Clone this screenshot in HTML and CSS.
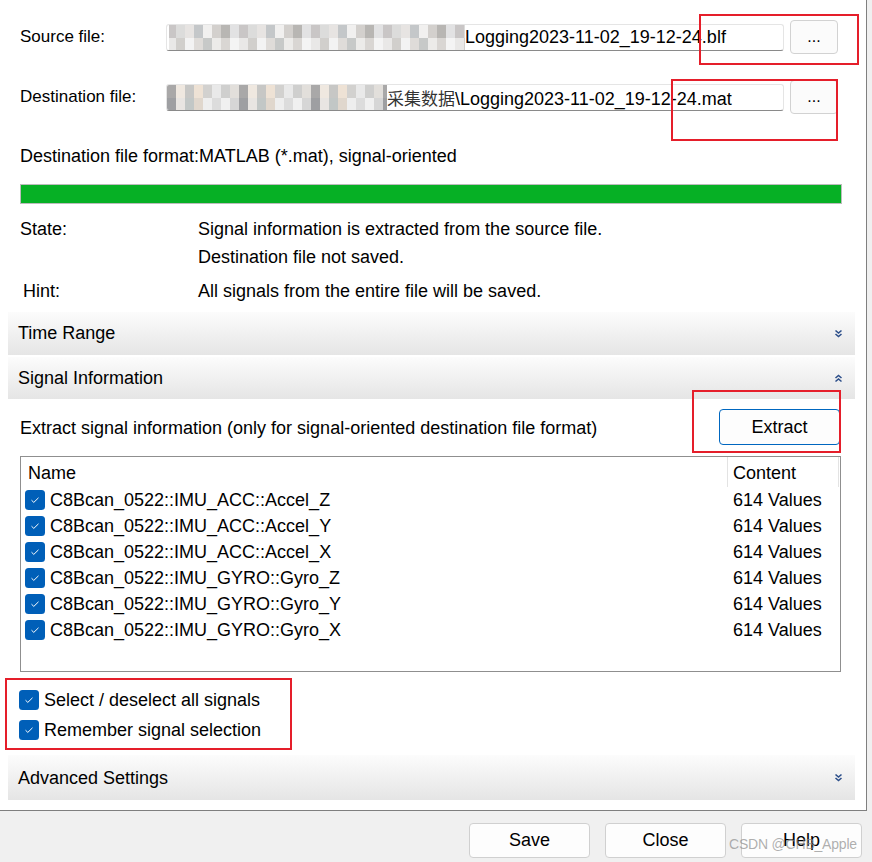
FILE: index.html
```html
<!DOCTYPE html>
<html>
<head>
<meta charset="utf-8">
<link rel="stylesheet" href="styles.css">
</head>
<body>
<div class="window">
  <div class="panel">
    <div class="file-row first">
      <div class="label">Source file:</div>
      <div class="input">
        <div class="mosaic m1"></div>
        <span class="path">Logging2023-11-02_19-12-24.blf</span>
      </div>
      <div class="browse">...</div>
    </div>
    <div class="file-row second">
      <div class="label">Destination file:</div>
      <div class="input">
        <div class="mosaic m2"></div>
        <span class="path"><span class="cjk">采集数据</span>\Logging2023-11-02_19-12-24.mat</span>
      </div>
      <div class="browse">...</div>
    </div>
    <div class="format">Destination file format:MATLAB (*.mat), signal-oriented</div>
    <div class="progress"><div class="progress-fill"></div></div>
    <div class="info">
      <div class="info-row"><span class="info-key">State:</span><span>Signal information is extracted from the source file.</span></div>
      <div class="info-row"><span class="info-key"></span><span>Destination file not saved.</span></div>
      <div class="info-row hint"><span class="info-key">Hint:</span><span>All signals from the entire file will be saved.</span></div>
    </div>
    <div class="section-head">
      <span>Time Range</span>
      <svg class="chev" width="9" height="9" viewBox="0 0 9 9"><path d="M1.5 1.5 L4.5 4 L7.5 1.5 M1.5 5 L4.5 7.5 L7.5 5" fill="none" stroke="#2d4f8a" stroke-width="1.6"/></svg>
    </div>
    <div class="section-head second-head">
      <span>Signal Information</span>
      <svg class="chev" width="9" height="9" viewBox="0 0 9 9"><path d="M1.5 4 L4.5 1.5 L7.5 4 M1.5 7.5 L4.5 5 L7.5 7.5" fill="none" stroke="#2d4f8a" stroke-width="1.6"/></svg>
    </div>
    <div class="extract-row">
      <span>Extract signal information (only for signal-oriented destination file format)</span>
      <div class="extract-btn">Extract</div>
    </div>
    <div class="list">
      <div class="list-head">
        <div class="col-name">Name</div>
        <div class="col-content">Content</div>
        <div class="col-rest"></div>
      </div>
      <div class="list-row"><div class="col-name"><svg class="cb" width="20" height="20" viewBox="0 0 20 20"><rect width="20" height="20" rx="3.5" fill="#005fb8"/><path d="M6.5 10.2 L8.8 12.4 L13.5 7.8" fill="none" stroke="#fff" stroke-width="1"/></svg>C8Bcan_0522::IMU_ACC::Accel_Z</div><div class="col-content">614 Values</div></div>
      <div class="list-row"><div class="col-name"><svg class="cb" width="20" height="20" viewBox="0 0 20 20"><rect width="20" height="20" rx="3.5" fill="#005fb8"/><path d="M6.5 10.2 L8.8 12.4 L13.5 7.8" fill="none" stroke="#fff" stroke-width="1"/></svg>C8Bcan_0522::IMU_ACC::Accel_Y</div><div class="col-content">614 Values</div></div>
      <div class="list-row"><div class="col-name"><svg class="cb" width="20" height="20" viewBox="0 0 20 20"><rect width="20" height="20" rx="3.5" fill="#005fb8"/><path d="M6.5 10.2 L8.8 12.4 L13.5 7.8" fill="none" stroke="#fff" stroke-width="1"/></svg>C8Bcan_0522::IMU_ACC::Accel_X</div><div class="col-content">614 Values</div></div>
      <div class="list-row"><div class="col-name"><svg class="cb" width="20" height="20" viewBox="0 0 20 20"><rect width="20" height="20" rx="3.5" fill="#005fb8"/><path d="M6.5 10.2 L8.8 12.4 L13.5 7.8" fill="none" stroke="#fff" stroke-width="1"/></svg>C8Bcan_0522::IMU_GYRO::Gyro_Z</div><div class="col-content">614 Values</div></div>
      <div class="list-row"><div class="col-name"><svg class="cb" width="20" height="20" viewBox="0 0 20 20"><rect width="20" height="20" rx="3.5" fill="#005fb8"/><path d="M6.5 10.2 L8.8 12.4 L13.5 7.8" fill="none" stroke="#fff" stroke-width="1"/></svg>C8Bcan_0522::IMU_GYRO::Gyro_Y</div><div class="col-content">614 Values</div></div>
      <div class="list-row"><div class="col-name"><svg class="cb" width="20" height="20" viewBox="0 0 20 20"><rect width="20" height="20" rx="3.5" fill="#005fb8"/><path d="M6.5 10.2 L8.8 12.4 L13.5 7.8" fill="none" stroke="#fff" stroke-width="1"/></svg>C8Bcan_0522::IMU_GYRO::Gyro_X</div><div class="col-content">614 Values</div></div>
    </div>
    <div class="options">
      <div class="opt"><svg class="cb" width="20" height="20" viewBox="0 0 20 20"><rect width="20" height="20" rx="3.5" fill="#005fb8"/><path d="M6.5 10.2 L8.8 12.4 L13.5 7.8" fill="none" stroke="#fff" stroke-width="1"/></svg>Select / deselect all signals</div>
      <div class="opt"><svg class="cb" width="20" height="20" viewBox="0 0 20 20"><rect width="20" height="20" rx="3.5" fill="#005fb8"/><path d="M6.5 10.2 L8.8 12.4 L13.5 7.8" fill="none" stroke="#fff" stroke-width="1"/></svg>Remember signal selection</div>
    </div>
    <div class="section-head adv">
      <span>Advanced Settings</span>
      <svg class="chev" width="9" height="9" viewBox="0 0 9 9"><path d="M1.5 1.5 L4.5 4 L7.5 1.5 M1.5 5 L4.5 7.5 L7.5 5" fill="none" stroke="#2d4f8a" stroke-width="1.6"/></svg>
    </div>

    <div class="mark mark1"></div>
    <div class="mark mark2"></div>
    <div class="mark mark3"></div>
    <div class="mark mark4"></div>
  </div>
  <div class="footer">
    <div class="btn">Save</div>
    <div class="btn">Close</div>
    <div class="btn">Help</div>
    <div class="watermark">CSDN @CHB_Apple</div>
  </div>
</div>
</body>
</html>
```
FILE: styles.css
```css
* { box-sizing: border-box; }
html, body { margin: 0; padding: 0; }
body {
  width: 872px;
  height: 862px;
  background: #f0f0f0;
  font-family: "Liberation Sans", Arial, sans-serif;
  font-size: 18px;
  color: #000;
  overflow: hidden;
}
.window { position: relative; width: 872px; height: 862px; }
.panel {
  position: relative;
  width: 867px;
  height: 811px;
  background: #fff;
  border-right: 1px solid #7f7f7f;
  border-bottom: 1px solid #7f7f7f;
  display: flex;
  flex-direction: column;
}
.file-row {
  display: flex;
  align-items: center;
  height: 34px;
  padding-left: 20px;
}
.file-row.first { margin-top: 20px; }
.file-row.second { margin-top: 26px; }
.label { width: 146px; font-size: 17px; }
.input {
  width: 618px;
  height: 27px;
  border: 1px solid #e5e5e5;
  border-bottom: 1px solid #8a8a8a;
  border-radius: 3px;
  display: flex;
  align-items: center;
  overflow: hidden;
}
.mosaic { height: 27px; flex: none; margin-top: 2px; }
.m1 {
  width: 298px;
  background:
    linear-gradient(90deg, #fff 0 2px, transparent 2px),
    repeating-linear-gradient(90deg, #c9c6c6 0 9px, #dcdcdb 9px 18px, #e7e4e2 18px 27px, #c4c7c9 27px 36px, #f1f0ef 36px 45px, #d3d0cd 45px 54px, #b8b6b3 54px 63px, #e2e2e3 63px 72px) 0 0 / 100% 13px no-repeat,
    repeating-linear-gradient(90deg, #e9e8e7 0 9px, #d1cfcc 9px 18px, #f3f3f3 18px 27px, #dfdcd9 27px 36px, #c7c9c8 36px 45px, #ecebe9 45px 54px, #d9d6d3 54px 63px, #f4f4f4 63px 72px) 0 13px / 100% 13px no-repeat;
}
.m2 {
  width: 220px;
  background:
    repeating-linear-gradient(90deg, #a9a8a8 0 9px, #efe8e0 9px 18px, #c7c7c5 18px 27px, #eee2d5 27px 36px, #d2d1cf 36px 45px, #e9e9e9 45px 54px, #cfcfce 54px 63px, #e2dfdb 63px 72px) 0 0 / 100% 13px no-repeat,
    repeating-linear-gradient(90deg, #9e9fa2 0 9px, #e8e5e2 9px 18px, #c2c7c6 18px 27px, #e0d7cd 27px 36px, #eeeeee 36px 45px, #dcdcdc 45px 54px, #f0f0f0 54px 63px, #d6d6d6 63px 72px) 0 13px / 100% 13px no-repeat;
}
.path { white-space: nowrap; padding-top: 1px; }
.cjk { font-family: "Noto Sans CJK SC", sans-serif; font-size: 17px; color: #333; }
.browse {
  width: 48px;
  height: 34px;
  margin-left: 6px;
  border: 1px solid #d2d2d2;
  border-radius: 4px;
  background: #fbfbfb;
  display: flex;
  align-items: center;
  justify-content: center;
  font-size: 16px;
}
.format {
  margin-top: 32px;
  padding-left: 20px;
  line-height: 20px;
}
.progress {
  margin: 18px 0 0 20px;
  width: 822px;
  height: 20px;
  border: 1px solid #bcbcbc;
  background: #e6e6e6;
}
.progress-fill { height: 100%; width: 100%; background: #06b025; }
.info { margin-top: 11px; padding-left: 20px; }
.info-row { display: flex; line-height: 28px; }
.info-key { width: 178px; flex: none; }
.info-row.hint { margin-top: 6px; padding-left: 3px; }
.info-row.hint .info-key { width: 175px; }
.section-head {
  margin: 7px 0 0 8px;
  width: 847px;
  height: 43px;
  background: linear-gradient(#fcfcfc, #e5e5e5);
  display: flex;
  align-items: center;
  justify-content: space-between;
  padding: 0 12px 0 10px;
}
.section-head.second-head { margin-top: 2px; height: 42px; }
.chev { display: block; }
.extract-row {
  margin-top: 10px;
  padding: 0 26px 0 20px;
  display: flex;
  align-items: center;
  justify-content: space-between;
  height: 36px;
}
.extract-row > span { padding-top: 2px; }
.extract-btn {
  width: 121px;
  height: 36px;
  border: 1px solid #0067c0;
  border-radius: 4px;
  background: #fdfdfd;
  display: flex;
  align-items: center;
  justify-content: center;
}
.list {
  margin: 11px 0 0 20px;
  width: 821px;
  height: 216px;
  border: 1px solid #8f8f8f;
}
.list-head { display: flex; height: 30px; align-items: center; }
.list-head .col-name { padding-left: 7px; padding-top: 2px; }
.list-head .col-content { border-left: 1px solid #e3e3e3; height: 30px; display: flex; align-items: center; padding-left: 5px; padding-top: 2px; }
.list-head .col-rest { border-left: 1px solid #e3e3e3; height: 30px; flex: 1; }
.col-name { width: 706px; flex: none; display: flex; align-items: center; }
.col-content { width: 111px; flex: none; }
.list-row { display: flex; height: 26px; align-items: center; }
.list-row .col-name { padding-left: 4px; }
.list-row .col-content { padding-left: 6px; }
.cb { flex: none; display: block; margin-right: 5px; }
.options { margin-top: 18px; padding-left: 19px; display: flex; flex-direction: column; gap: 10px; }
.opt { display: flex; align-items: center; height: 20px; }
.section-head.adv { margin-top: 15px; height: 45px; }
.section-head.adv span { padding-top: 2px; }
.mark {
  position: absolute;
  border: 2px solid #e51e2a;
}
.mark1 { left: 699px; top: 14px; width: 160px; height: 51px; }
.mark2 { left: 671px; top: 79px; width: 167px; height: 62px; }
.mark3 { left: 692px; top: 390px; width: 149px; height: 63px; }
.mark4 { left: 5px; top: 678px; width: 287px; height: 72px; }
.footer {
  display: flex;
  justify-content: flex-end;
  gap: 15px;
  padding: 12px 10px 0 0;
}
.btn {
  width: 121px;
  height: 35px;
  border: 1px solid #d0d0d0;
  border-radius: 4px;
  background: #fdfdfd;
  display: flex;
  align-items: center;
  justify-content: center;
}
.watermark {
  position: absolute;
  left: 729px;
  top: 836px;
  font-size: 14px;
  letter-spacing: -0.2px;
  color: rgba(140,140,140,0.7);
  white-space: nowrap;
}
```
